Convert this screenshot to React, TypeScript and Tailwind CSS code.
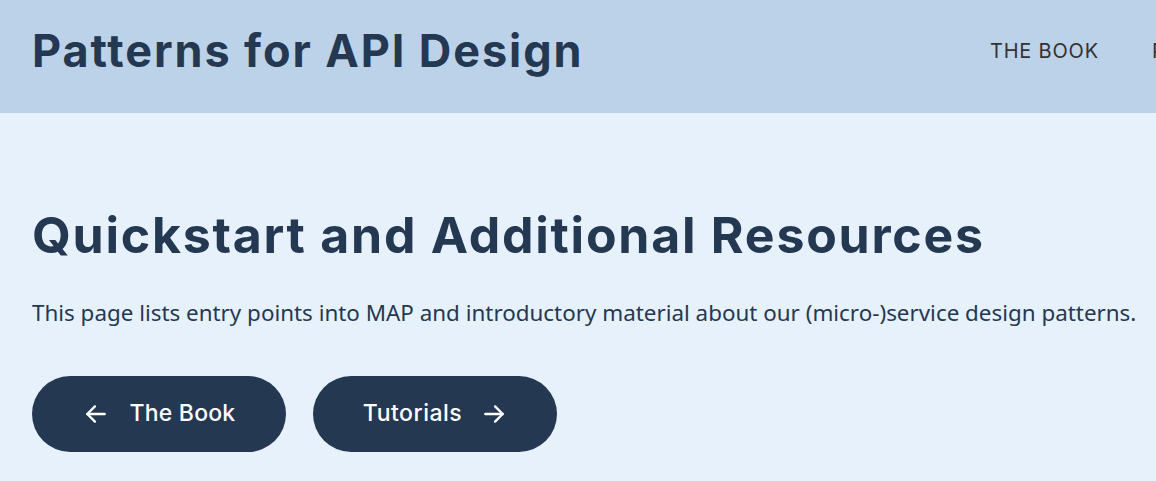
import React from "react";

const ArrowLeft = () => (
  <svg width="26" height="26" viewBox="0 0 24 24" fill="none" stroke="currentColor" strokeWidth="2.2" strokeLinecap="round" strokeLinejoin="round">
    <path d="M20 12H4" />
    <path d="M11 5l-7 7 7 7" />
  </svg>
);
const ArrowRight = () => (
  <svg width="26" height="26" viewBox="0 0 24 24" fill="none" stroke="currentColor" strokeWidth="2.2" strokeLinecap="round" strokeLinejoin="round">
    <path d="M4 12h16" />
    <path d="M13 5l7 7-7 7" />
  </svg>
);

export default function App() {
  const heading = { fontFamily: "Inter, 'DejaVu Sans', sans-serif" };
  return (
    <div className="w-[1156px] h-[481px] overflow-hidden bg-[#e6f1fc] text-[#253852]">
      <header className="h-[113px] bg-[#bcd2e8] flex items-center pl-[32px] pb-[12px] overflow-hidden">
        <div className="flex-1 min-w-0">
          <span className="text-[45px] leading-[1.2] font-bold tracking-[1.9px] whitespace-nowrap" style={heading}>
            Patterns for API Design
          </span>
        </div>
        <nav className="w-[166px] shrink-0 overflow-hidden">
          <ul className="flex gap-[53px] whitespace-nowrap text-[20px] text-[#333] tracking-[0.8px]" style={heading}>
            <li>THE BOOK</li>
            <li>PATTERNS</li>
          </ul>
        </nav>
      </header>
      <main className="px-[32px] pt-[92px]">
        <h1 className="text-[50px] font-bold leading-[1.2] tracking-[1.75px] whitespace-nowrap" style={heading}>
          Quickstart and Additional Resources
        </h1>
        <p className="mt-[31px] text-[22.4px] leading-[1.5] whitespace-nowrap" style={{ fontFamily: "'Noto Sans', sans-serif" }}>
          This page lists entry points into MAP and introductory material about our (micro-)service design patterns.
        </p>
        <div className="mt-[46px] flex gap-[27px]" style={heading}>
          <button className="h-[76px] w-[254px] rounded-full bg-[#253852] text-white flex items-center justify-center gap-[21px] text-[23px] font-medium tracking-[0.2px]">
            <ArrowLeft />
            <span>The Book</span>
          </button>
          <button className="h-[76px] w-[244px] rounded-full bg-[#253852] text-white flex items-center justify-center gap-[19px] text-[23px] font-medium tracking-[0.5px]">
            <span>Tutorials</span>
            <ArrowRight />
          </button>
        </div>
      </main>
    </div>
  );
}
